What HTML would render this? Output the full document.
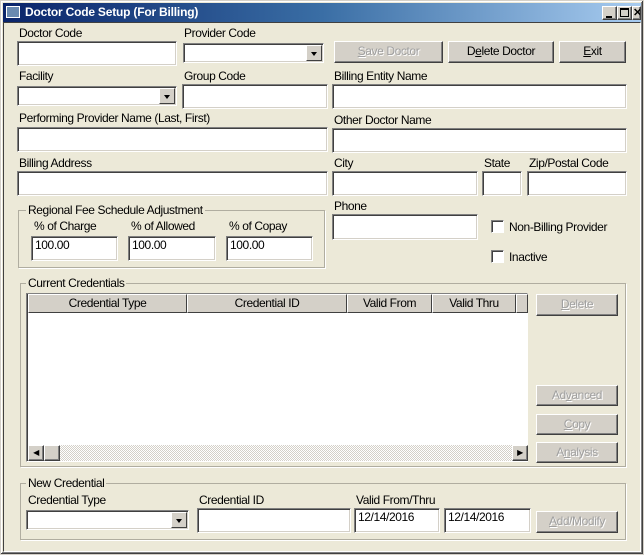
<!DOCTYPE html><html><head><style>
*{box-sizing:border-box;margin:0;padding:0}
body{width:644px;height:555px;background:#ece9d8;font-family:"Liberation Sans",sans-serif;font-size:12px;letter-spacing:-0.4px;color:#000;position:relative;overflow:hidden}
.a{position:absolute}
.win{left:0;top:0;width:644px;height:555px;border:1px solid #d4d0c8;box-shadow:inset -1px -1px #404040,inset 1px 1px #fff,inset -2px -2px #808080}
.title{left:3px;top:3px;width:638px;height:19px;background:linear-gradient(90deg,#0a246a,#3a6ea5 50%,#a6caf0);color:#fff;font-weight:bold;font-size:12px;line-height:19px;padding-left:22px;letter-spacing:-0.2px}
.in{background:#fff;border:1px solid;border-color:#808080 #fff #fff #808080;box-shadow:inset 1px 1px #404040,inset -1px -1px #d4d0c8;padding:2px 3px;line-height:17px}
.btn{background:#d4d0c8;border:1px solid;border-color:#fff #404040 #404040 #fff;box-shadow:inset -1px -1px #808080;text-align:center;line-height:19px}
.dis{color:#a0a0a0;text-shadow:1px 1px #fff}
.grp{border:1px solid #b0ada0;box-shadow:1px 1px #fff}
.leg{background:#ece9d8;padding:0 2px}
.dd{position:absolute;right:1px;top:1px;bottom:1px;width:16px;background:#d4d0c8;border:1px solid;border-color:#fff #404040 #404040 #fff}
.dd:after{content:"";position:absolute;left:4px;top:6px;border:3.5px solid transparent;border-top:4px solid #000}
.chk{width:13px;height:13px;background:#fff;border:1px solid;border-color:#808080 #fff #fff #808080;box-shadow:inset 1px 1px #404040}
.th{top:0;height:19px;background:#d4d0c8;border:1px solid;border-color:#fff #404040 #404040 #fff;text-align:center;line-height:17px}
</style></head><body>
<div class="a win"></div>
<div class="a title" style="background:linear-gradient(90deg,#0a246a,#3a6ea5 50%,#a8ccf0)">Doctor Code Setup (For Billing)</div>
<div class="a" style="left:6px;top:6px;width:14px;height:12px;background:#6a8ab0;border:1px solid #fff"></div>
<div class="a btn" style="left:602px;top:6px;width:15px;height:14px"><div class="a" style="left:3px;top:9px;width:6px;height:2px;background:#000"></div></div>
<div class="a btn" style="left:617px;top:6px;width:15px;height:14px"><div class="a" style="left:2px;top:1px;width:9px;height:9px;border:1px solid #000;border-top-width:2px"></div></div>
<div class="a btn" style="left:632px;top:6px;width:9px;height:14px;overflow:hidden;font-weight:bold;line-height:12px;font-size:11px">✕</div>
<div class="a" style="left:3px;top:22px;width:638px;height:530px;border:1px solid;border-color:#404040 #fff #fff #404040"></div>

<div class="a" style="left:19px;top:26px">Doctor Code</div>
<div class="a in" style="left:17px;top:41px;width:160px;height:25px"></div>
<div class="a" style="left:184px;top:26px">Provider Code</div>
<div class="a in" style="left:183px;top:43px;width:141px;height:20px"><div class="dd"></div></div>
<div class="a btn dis" style="left:334px;top:41px;width:109px;height:22px"><u>S</u>ave Doctor</div>
<div class="a btn" style="left:448px;top:41px;width:106px;height:22px">D<u>e</u>lete Doctor</div>
<div class="a btn" style="left:559px;top:41px;width:67px;height:22px"><u>E</u>xit</div>

<div class="a" style="left:19px;top:69px">Facility</div>
<div class="a in" style="left:17px;top:86px;width:160px;height:20px"><div class="dd"></div></div>
<div class="a" style="left:184px;top:69px">Group Code</div>
<div class="a in" style="left:182px;top:84px;width:146px;height:25px"></div>
<div class="a" style="left:334px;top:69px">Billing Entity Name</div>
<div class="a in" style="left:332px;top:84px;width:295px;height:25px"></div>

<div class="a" style="left:19px;top:111px">Performing Provider Name (Last, First)</div>
<div class="a in" style="left:17px;top:127px;width:311px;height:25px"></div>
<div class="a" style="left:334px;top:113px">Other Doctor Name</div>
<div class="a in" style="left:332px;top:128px;width:295px;height:25px"></div>

<div class="a" style="left:19px;top:156px">Billing Address</div>
<div class="a in" style="left:17px;top:171px;width:311px;height:25px"></div>
<div class="a" style="left:334px;top:156px">City</div>
<div class="a in" style="left:332px;top:171px;width:146px;height:25px"></div>
<div class="a" style="left:484px;top:156px">State</div>
<div class="a in" style="left:482px;top:171px;width:40px;height:25px"></div>
<div class="a" style="left:529px;top:156px">Zip/Postal Code</div>
<div class="a in" style="left:527px;top:171px;width:100px;height:25px"></div>

<div class="a grp" style="left:18px;top:210px;width:307px;height:58px"></div>
<div class="a leg" style="left:26px;top:203px">Regional Fee Schedule Adjustment</div>
<div class="a" style="left:34px;top:219px">% of Charge</div>
<div class="a" style="left:131px;top:219px">% of Allowed</div>
<div class="a" style="left:229px;top:219px">% of Copay</div>
<div class="a in" style="left:31px;top:236px;width:87px;height:25px;padding-top:0">100.00</div>
<div class="a in" style="left:128px;top:236px;width:88px;height:25px;padding-top:0">100.00</div>
<div class="a in" style="left:226px;top:236px;width:87px;height:25px;padding-top:0">100.00</div>

<div class="a" style="left:334px;top:199px">Phone</div>
<div class="a in" style="left:332px;top:214px;width:146px;height:26px"></div>
<div class="a chk" style="left:491px;top:220px"></div>
<div class="a" style="left:509px;top:220px">Non-Billing Provider</div>
<div class="a chk" style="left:491px;top:250px"></div>
<div class="a" style="left:509px;top:250px">Inactive</div>

<div class="a grp" style="left:20px;top:283px;width:606px;height:184px"></div>
<div class="a leg" style="left:26px;top:276px">Current Credentials</div>
<div class="a" style="left:26px;top:293px;width:502px;height:169px;background:#fff;border:1px solid;border-color:#808080 #fff #fff #808080;box-shadow:inset 1px 1px #404040">
 <div class="a th" style="left:1px;width:159px">Credential Type</div>
 <div class="a th" style="left:160px;width:160px">Credential ID</div>
 <div class="a th" style="left:320px;width:85px">Valid From</div>
 <div class="a th" style="left:405px;width:84px">Valid Thru</div>
 <div class="a th" style="left:489px;width:12px"></div>
 <div class="a" style="left:1px;top:151px;width:500px;height:16px;background:repeating-conic-gradient(#d4d0c8 0 25%,#fff 0 50%) 0 0/2px 2px"></div>
 <div class="a btn" style="left:1px;top:151px;width:16px;height:16px;line-height:14px;font-size:8px">◀</div>
 <div class="a btn" style="left:17px;top:151px;width:16px;height:16px"></div>
 <div class="a btn" style="left:485px;top:151px;width:16px;height:16px;line-height:14px;font-size:8px">▶</div>
</div>
<div class="a btn dis" style="left:536px;top:294px;width:82px;height:22px"><u>D</u>elete</div>
<div class="a btn dis" style="left:536px;top:385px;width:82px;height:21px">Ad<u>v</u>anced</div>
<div class="a btn dis" style="left:536px;top:414px;width:82px;height:21px"><u>C</u>opy</div>
<div class="a btn dis" style="left:536px;top:442px;width:82px;height:21px">A<u>n</u>alysis</div>

<div class="a grp" style="left:20px;top:483px;width:606px;height:57px"></div>
<div class="a leg" style="left:26px;top:476px">New Credential</div>
<div class="a" style="left:28px;top:493px">Credential Type</div>
<div class="a" style="left:199px;top:493px">Credential ID</div>
<div class="a" style="left:356px;top:493px">Valid From/Thru</div>
<div class="a in" style="left:26px;top:510px;width:163px;height:20px"><div class="dd"></div></div>
<div class="a in" style="left:197px;top:508px;width:154px;height:25px"></div>
<div class="a in" style="left:354px;top:508px;width:86px;height:25px;padding-top:0">12/14/2016</div>
<div class="a in" style="left:444px;top:508px;width:87px;height:25px;padding-top:0">12/14/2016</div>
<div class="a btn dis" style="left:536px;top:511px;width:82px;height:22px"><u>A</u>dd/Modify</div>
</body></html>
